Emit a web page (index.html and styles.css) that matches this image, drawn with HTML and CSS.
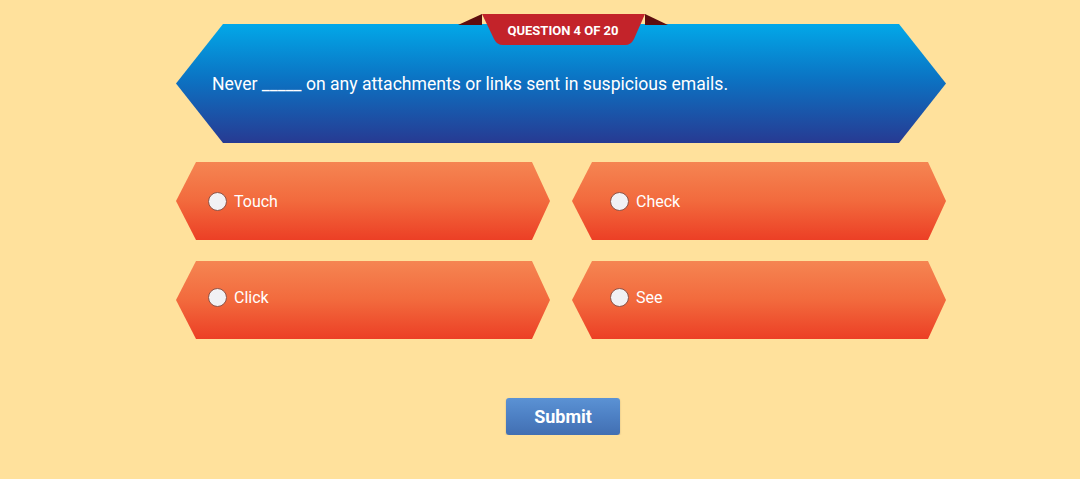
FILE: index.html
```html
<!DOCTYPE html>
<html lang="en">
<head>
    <meta charset="UTF-8">
    <meta name="viewport" content="width=device-width, initial-scale=1.0">
    <title>Quiz - Question 4</title>
    <link rel="stylesheet" href="styles.css">
</head>
<body>

    <div class="quiz">

        <!-- Question -->
        <div class="question-wrap">
            <div class="question">
                <p>Never _____ on any attachments or links sent in suspicious emails.</p>
            </div>
            <div class="ribbon">
                <svg width="210" height="32" viewBox="0 0 210 32">
                    <polygon points="0,11 24,0 24,11" fill="#5e0d0e"/>
                    <polygon points="187,0 210,11 187,11" fill="#5e0d0e"/>
                    <path d="M24 0 H187 L176 25 Q173 31 167 31 H45 Q39 31 36 25 Z" fill="#c3232a"/>
                </svg>
                <span>QUESTION 4 OF 20</span>
            </div>
        </div>

        <!-- Answers -->
        <div class="answers">
            <label class="answer"><input type="radio" name="answer"><span class="dot"></span>Touch</label>
            <label class="answer"><input type="radio" name="answer"><span class="dot"></span>Check</label>
            <label class="answer"><input type="radio" name="answer"><span class="dot"></span>Click</label>
            <label class="answer"><input type="radio" name="answer"><span class="dot"></span>See</label>
        </div>

        <div class="actions">
            <button class="submit">Submit</button>
        </div>
    </div>

</body>
</html>
```

FILE: styles.css
```css
body {
    margin: 0;
    background-color: #ffe19c;
    font-family: Roboto, "Liberation Sans", sans-serif;
    color: #ffffff;
}

.quiz {
    width: 770px;
    margin-left: 176px;
    padding-top: 24px;
}

/* Question panel */
.question-wrap {
    position: relative;
}

.question {
    height: 119px;
    display: flex;
    align-items: center;
    padding-left: 36px;
    background: linear-gradient(to bottom, #02a8e8 0%, #0b74c4 45%, #273a92 100%);
    clip-path: polygon(47px 0, calc(100% - 47px) 0, 100% 50%, calc(100% - 47px) 100%, 47px 100%, 0 50%);
}

.question p {
    margin: 0;
    font-size: 17.6px;
}

.ribbon {
    position: absolute;
    left: 282px;
    top: -10px;
    width: 210px;
    height: 32px;
}

.ribbon svg {
    display: block;
}

.ribbon span {
    position: absolute;
    inset: 0;
    display: flex;
    align-items: center;
    justify-content: center;
    font-size: 13px;
    font-weight: bold;
}

/* Answers */
.answers {
    display: grid;
    grid-template-columns: 1fr 1fr;
    column-gap: 22px;
    row-gap: 21px;
    margin-top: 19px;
}

.answer {
    box-sizing: border-box;
    height: 78px;
    display: flex;
    align-items: center;
    gap: 7px;
    padding-left: 32px;
    font-size: 16px;
    background: linear-gradient(to bottom, #f58552 0%, #f26a3d 50%, #ec3f25 100%);
    clip-path: polygon(20px 0, calc(100% - 18px) 0, 100% 50%, calc(100% - 18px) 100%, 20px 100%, 0 50%);
    cursor: pointer;
}

.answer:nth-child(even) {
    padding-left: 38px;
}

.answer:nth-child(n+3) {
    padding-bottom: 5px;
}

.answer input {
    display: none;
}

.dot {
    width: 17px;
    height: 17px;
    border-radius: 50%;
    background-color: #f1f1f4;
    border: 1.5px solid #8c5448;
}

.answer input:checked + .dot {
    background: radial-gradient(circle, #3b6fb6 40%, #f1f1f4 45%);
}

/* Submit */
.actions {
    display: flex;
    justify-content: center;
    margin-top: 59px;
    padding-left: 4px;
}

.submit {
    width: 114px;
    height: 37px;
    border: none;
    border-radius: 3px;
    background: linear-gradient(to bottom, #5b92d4 0%, #4d80c4 50%, #426fb2 100%);
    box-shadow: 0 1px 2px rgba(0, 0, 0, 0.2);
    color: #ffffff;
    font-family: Roboto, "Liberation Sans", sans-serif;
    font-size: 18px;
    font-weight: bold;
    cursor: pointer;
}
```
